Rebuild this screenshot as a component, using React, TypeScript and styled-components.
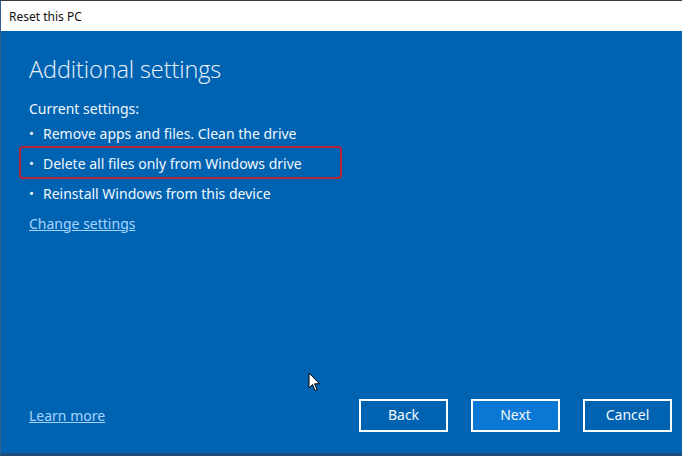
import React from 'react';
import styled, { createGlobalStyle } from 'styled-components';

const GlobalStyle = createGlobalStyle`
  html, body {
    margin: 0;
    padding: 0;
    background: #0063b1;
  }
  body {
    font-family: "Noto Sans", "Open Sans", sans-serif;
  }
`;

const Window = styled.div`
  width: 682px;
  height: 456px;
  box-sizing: border-box;
  display: flex;
  flex-direction: column;
  border-top: 1px solid #3a3a3a;
  border-left: 1px solid #2f5f8f;
  border-bottom: 3px solid #1f4d7a;
  background: #0063b1;
  overflow: hidden;
  position: relative;
`;

const TitleBar = styled.div`
  height: 30px;
  background: #ffffff;
  display: flex;
  align-items: center;
  padding-left: 8px;
  font-size: 12px;
  color: #111;
`;

const Body = styled.div`
  flex: 1;
  display: flex;
  flex-direction: column;
  padding: 22px 10px 21px 28px;
  color: #f2f7fc;
`;

const Heading = styled.h1`
  margin: 0 0 13px;
  font-family: "Open Sans", "Noto Sans", sans-serif;
  font-weight: 300;
  font-size: 23.5px;
  letter-spacing: -0.1px;
  color: #eef5fc;
`;

const Line = styled.div<{ $short?: boolean }>`
  height: ${p => (p.$short ? 20 : 30)}px;
  display: flex;
  align-items: center;
  font-size: 14px;
  position: relative;
`;

const Bullet = styled.span`
  width: 14px;
  font-size: 13px;
`;

const Highlight = styled.div`
  position: absolute;
  left: -10px;
  top: -2px;
  width: 323px;
  height: 33px;
  border: 2px solid #b3263e;
  border-radius: 4px;
  box-sizing: border-box;
`;

const Link = styled.a`
  color: #a6d4ff;
  text-decoration: underline;
  font-size: 14px;
  cursor: pointer;
`;

const Footer = styled.div`
  margin-top: auto;
  display: flex;
  align-items: center;
`;

const Buttons = styled.div`
  margin-left: auto;
  display: flex;
  gap: 23px;
`;

const Button = styled.button<{ $primary?: boolean }>`
  width: 89px;
  height: 33px;
  box-sizing: border-box;
  border: 2px solid #ffffff;
  background: ${p => (p.$primary ? '#0a78d4' : '#0063b1')};
  color: #f4f8fc;
  font-family: "Noto Sans", sans-serif;
  font-size: 14px;
  padding: 0 0 2px;
`;

const Cursor = styled.svg`
  position: absolute;
  left: 307px;
  top: 371px;
`;

const items = [
  'Remove apps and files. Clean the drive',
  'Delete all files only from Windows drive',
  'Reinstall Windows from this device',
];

function App() {
  return (
    <Window>
      <GlobalStyle />
      <TitleBar>Reset this PC</TitleBar>
      <Body>
        <Heading>Additional settings</Heading>
        <Line $short>Current settings:</Line>
        {items.map((t, i) => (
          <Line key={t}>
            {i === 1 && <Highlight />}
            <Bullet>•</Bullet>
            {t}
          </Line>
        ))}
        <Line>
          <Link>Change settings</Link>
        </Line>
        <Footer>
          <Link>Learn more</Link>
          <Buttons>
            <Button>Back</Button>
            <Button $primary>Next</Button>
            <Button>Cancel</Button>
          </Buttons>
        </Footer>
      </Body>
      <Cursor width="13" height="20" viewBox="0 0 13 20">
        <path d="M1 1 L1 16 L4.5 12.5 L7 18.5 L9 17.6 L6.6 11.8 L11.5 11.8 Z" fill="#fff" stroke="#000" strokeWidth="1" />
      </Cursor>
    </Window>
  );
}

export default App;
